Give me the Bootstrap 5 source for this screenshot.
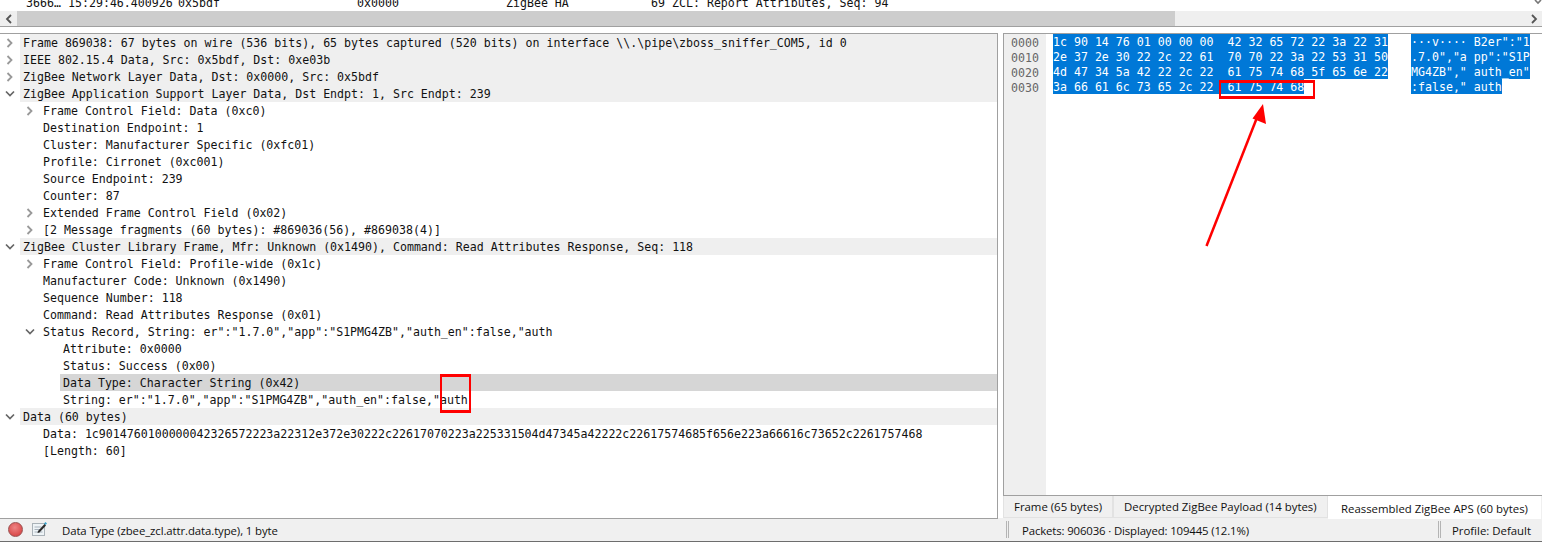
<!DOCTYPE html>
<html lang="en">
<head>
<meta charset="utf-8">
<title>Wireshark</title>
<link rel="stylesheet" href="https://cdn.jsdelivr.net/npm/bootstrap@5.3.0/dist/css/bootstrap.min.css">
<style>
html,body{height:544px;overflow:hidden;background:#fff}
body{position:relative;color:#111;font-family:"DejaVu Sans Mono","Liberation Mono",monospace;font-size:11.6px}
.pkt-strip{height:11px;overflow:hidden;background:#fff}
.pkt-row{margin-top:-5px;height:16px;line-height:16px;padding-left:26px;white-space:pre}
.c1{width:42px}.c2{width:110px}.c3{width:179px}.c4{width:149px}.c5{width:145px}.c6{width:21px}
.hbar{height:15px;background:#efefef}
.hbar-btn{width:17px;color:#555}
.hbar-thumb{width:1158px;background:#cdcdcd}
.hbar-end{width:16px;color:#555}
.split-gap{height:7px;border-top:1px solid #a0a0a0;background:#fff;border-bottom:0}
.panes{height:485px}
.tree-pane{width:998px;height:486px;border:1px solid #a0a0a0;border-left:0;overflow:hidden;padding-top:0}
.tree-row{height:17px;line-height:19px;white-space:pre}
.lv1{padding-left:20px}.lv2{padding-left:40px}
.twist{width:20px;flex:none;line-height:0}
.lbl{flex:1 1 auto;padding-left:3px;min-width:0}
.top-lbl{background:#efefef}
.sel-lbl{background:#d6d6d6}
.right-col{width:539px;margin-left:5px}
.hex-pane{height:463px;border:1px solid #a0a0a0;border-right:0;overflow:hidden}
.gutter{width:42px;background:#efefef;color:#666;padding:1px 0 0 7px;line-height:15px}
.gutter div{height:15px;line-height:17px}
.hex-body{padding:0 0 0 7px}
.hex-line{height:15px;white-space:pre}
.hex-col{width:358px}
.hl{display:inline-block;height:15px;line-height:17px;vertical-align:top;background:#0078d7;color:#fff}
.tabbar{height:23px;font-family:"Open Sans","Noto Sans",sans-serif;font-size:11.4px;background:#f0f0f0;white-space:nowrap}
.tabx{height:22px;line-height:21px;background:#f0f0f0;border:1px solid #e2e2e2;border-top:0;padding:0 10px}
.tabx.t1{width:110px}
.tabx.t2{width:215px}
.tabx.t3{height:23px;background:#fff;border:0;border-top:1px solid #fff;width:213px;padding:1px 0 0 13px;line-height:21px}
.statusbar{height:24px;background:#f0f0f0;font-family:"Open Sans","Noto Sans",sans-serif;font-size:11.4px;letter-spacing:-.1px;border-bottom:1px solid #6d6d6d}
.st-left{width:1006px}
.st-text{padding-top:2px}
.rec-dot{width:15px;height:15px;border-radius:50%;background:radial-gradient(circle at 45% 35%,#ee8484,#da4c4c 72%);border:1px solid #9a5050;margin:0 9px 0 8px;flex:none}
.st-note{width:16px;height:16px;flex:none;margin-right:14px}
.st-sep{width:3px;height:17px;border-left:1px solid #b4b4b4;border-right:1px solid #b4b4b4;flex:none}
.st-packets{width:429px;padding:2px 0 0 13px;letter-spacing:-.14px}
.st-profile{padding:2px 0 0 11px;letter-spacing:0}
.overlay-mark{position:absolute;border-style:solid;border-color:#f00;border-width:3px 2px;pointer-events:none}
.mark-a{left:440px;top:374px;width:31px;height:39px}
.mark-b{left:1219px;top:80px;width:96px;height:19px}
.arrow-over{position:absolute;left:1195px;top:95px;width:80px;height:160px;pointer-events:none}
.corner-arrow{position:absolute;left:1534px;top:0;width:8px;height:8px}
</style>
</head>
<body>
<div class="pkt-strip">
  <div class="pkt-row d-flex"><span class="c1">3666…</span><span class="c2">15:29:46.400926</span><span class="c3">0x5bdf</span><span class="c4">0x0000</span><span class="c5">ZigBee HA</span><span class="c6">69</span><span>ZCL: Report Attributes, Seq: 94</span></div>
</div>
<svg class="corner-arrow" viewBox="0 0 8 8"><path d="M1 0 L4 3 L7 0" fill="none" stroke="#777" stroke-width="1.6"/></svg>
<div class="hbar d-flex">
  <div class="hbar-btn d-flex align-items-center justify-content-center"><svg width="8" height="10" viewBox="0 0 8 10"><path d="M6 1 L2 5 L6 9" fill="none" stroke="#555" stroke-width="1.8"/></svg></div>
  <div class="hbar-thumb"></div>
  <div class="flex-grow-1"></div>
  <div class="hbar-end d-flex align-items-center justify-content-center"><svg width="8" height="10" viewBox="0 0 8 10"><path d="M2 1 L6 5 L2 9" fill="none" stroke="#555" stroke-width="1.8"/></svg></div>
</div>
<div class="split-gap"></div>
<div class="panes d-flex align-items-start">
  <div class="tree-pane flex-none" id="tree"></div>
  <div class="right-col d-flex flex-column">
    <div class="hex-pane d-flex">
      <div class="gutter"><div>0000</div><div>0010</div><div>0020</div><div>0030</div></div>
      <div class="hex-body d-flex">
        <div class="hex-col">
          <div class="hex-line"><span class="hl">1c 90 14 76 01 00 00 00  42 32 65 72 22 3a 22 31</span></div>
          <div class="hex-line"><span class="hl">2e 37 2e 30 22 2c 22 61  70 70 22 3a 22 53 31 50</span></div>
          <div class="hex-line"><span class="hl">4d 47 34 5a 42 22 2c 22  61 75 74 68 5f 65 6e 22</span></div>
          <div class="hex-line"><span class="hl">3a 66 61 6c 73 65 2c 22  61 75 74 68</span></div>
        </div>
        <div>
          <div class="hex-line"><span class="hl">···v···· B2er":"1</span></div>
          <div class="hex-line"><span class="hl">.7.0","a pp":"S1P</span></div>
          <div class="hex-line"><span class="hl">MG4ZB"," auth_en"</span></div>
          <div class="hex-line"><span class="hl">:false," auth</span></div>
        </div>
      </div>
    </div>
    <div class="tabbar d-flex">
      <div class="tabx t1">Frame (65 bytes)</div>
      <div class="tabx t2">Decrypted ZigBee Payload (14 bytes)</div>
      <div class="tabx t3">Reassembled ZigBee APS (60 bytes)</div>
    </div>
  </div>
</div>
<div class="statusbar d-flex align-items-center">
  <div class="st-left d-flex align-items-center">
    <span class="rec-dot"></span>
    <svg class="st-note" viewBox="0 0 16 16"><rect x="0.500" y="2.500" width="12" height="12" fill="#eef3f6" stroke="#aab2b8"/><path d="M2.500 6h7M2.500 8.500h6M2.500 11h8" stroke="#a8b2bc"/><path d="M6 10 L12.500 3 L14 4.500 L7.500 11.500 L5.500 12 Z" fill="#2b2b2b"/><path d="M12 2.500 L13.500 1 L15 2.500 L13.500 4 Z" fill="#3aa0c8"/></svg>
    <span class="st-text">Data Type (zbee_zcl.attr.data.type), 1 byte</span>
  </div>
  <span class="st-sep"></span>
  <div class="st-packets">Packets: 906036 · Displayed: 109445 (12.1%)</div>
  <span class="st-sep"></span>
  <div class="st-profile">Profile: Default</div>
</div>

<div class="overlay-mark mark-a"></div>
<div class="overlay-mark mark-b"></div>
<svg class="arrow-over" viewBox="0 0 80 160"><path d="M11.500 151 L63 20" stroke="#f00" stroke-width="2.500" fill="none"/><path d="M68 9 L71 29 L57.500 23.500 Z" fill="#f00"/></svg>

<script>
var rows=[
[0,'c','Frame 869038: 67 bytes on wire (536 bits), 65 bytes captured (520 bits) on interface \\\\.\\pipe\\zboss_sniffer_COM5, id 0','top'],
[0,'c','IEEE 802.15.4 Data, Src: 0x5bdf, Dst: 0xe03b','top'],
[0,'c','ZigBee Network Layer Data, Dst: 0x0000, Src: 0x5bdf','top'],
[0,'o','ZigBee Application Support Layer Data, Dst Endpt: 1, Src Endpt: 239','top'],
[1,'c','Frame Control Field: Data (0xc0)',''],
[1,'','Destination Endpoint: 1',''],
[1,'','Cluster: Manufacturer Specific (0xfc01)',''],
[1,'','Profile: Cirronet (0xc001)',''],
[1,'','Source Endpoint: 239',''],
[1,'','Counter: 87',''],
[1,'c','Extended Frame Control Field (0x02)',''],
[1,'c','[2 Message fragments (60 bytes): #869036(56), #869038(4)]',''],
[0,'o','ZigBee Cluster Library Frame, Mfr: Unknown (0x1490), Command: Read Attributes Response, Seq: 118','top'],
[1,'c','Frame Control Field: Profile-wide (0x1c)',''],
[1,'','Manufacturer Code: Unknown (0x1490)',''],
[1,'','Sequence Number: 118',''],
[1,'','Command: Read Attributes Response (0x01)',''],
[1,'o','Status Record, String: er":"1.7.0","app":"S1PMG4ZB","auth_en":false,"auth',''],
[2,'','Attribute: 0x0000',''],
[2,'','Status: Success (0x00)',''],
[2,'','Data Type: Character String (0x42)','sel'],
[2,'','String: er":"1.7.0","app":"S1PMG4ZB","auth_en":false,"auth',''],
[0,'o','Data (60 bytes)','top'],
[1,'','Data: 1c9014760100000042326572223a22312e372e30222c22617070223a225331504d47345a42222c22617574685f656e223a66616c73652c2261757468',''],
[1,'','[Length: 60]','']
];
var icons={c:'<svg width="20" height="17" viewBox="0 0 20 17"><path d="M7.500 5 L11.500 9 L7.500 13" fill="none" stroke="#999" stroke-width="1.800"/></svg>',
o:'<svg width="20" height="17" viewBox="0 0 20 17"><path d="M6 6.500 L10 10.500 L14 6.500" fill="none" stroke="#666" stroke-width="1.700"/></svg>'};
var t=document.getElementById('tree');
rows.forEach(function(r){
  var d=document.createElement('div');
  d.className='tree-row d-flex'+(r[0]==1?' lv1':r[0]==2?' lv2':'');
  var tw=document.createElement('span');tw.className='twist';tw.innerHTML=r[1]?icons[r[1]]:'';
  var l=document.createElement('span');l.className='lbl'+(r[3]=='top'?' top-lbl':r[3]=='sel'?' sel-lbl':'');l.textContent=r[2];
  d.appendChild(tw);d.appendChild(l);t.appendChild(d);
});
</script>
<script src="https://cdn.jsdelivr.net/npm/bootstrap@5.3.0/dist/js/bootstrap.bundle.min.js"></script>
</body>
</html>
